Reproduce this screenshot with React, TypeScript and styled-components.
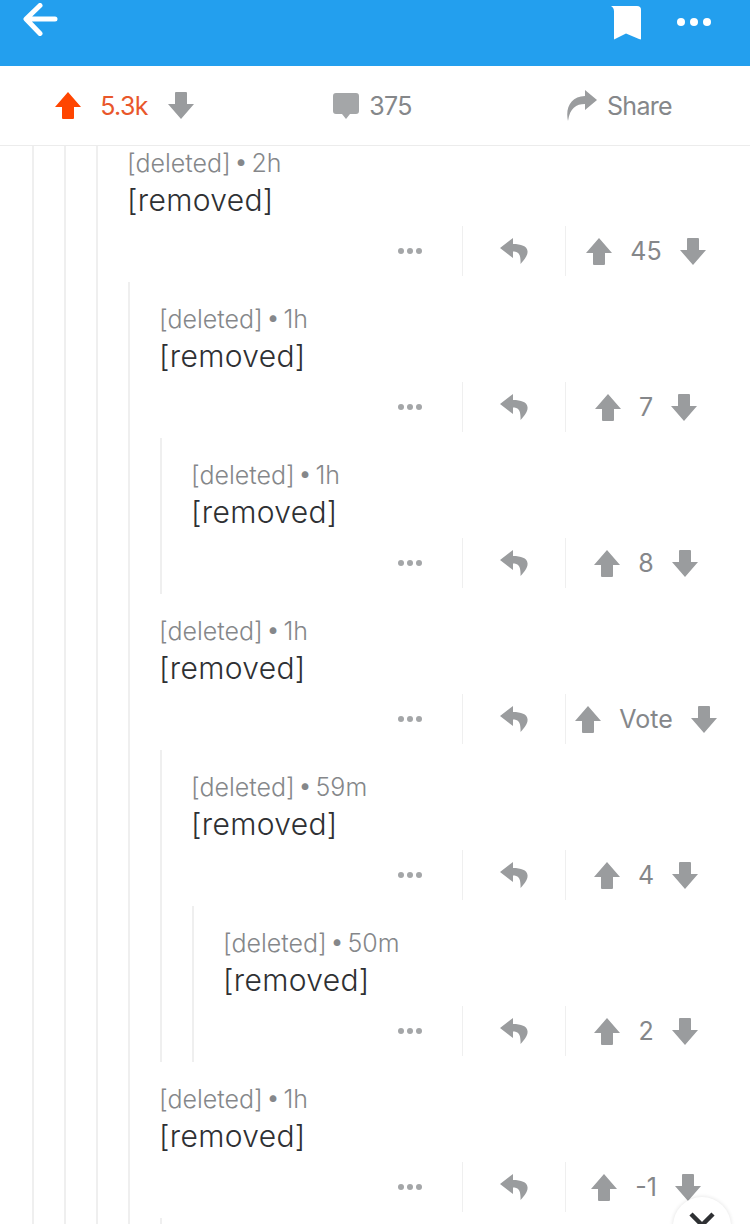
import React from "react";
import styled, { createGlobalStyle } from "styled-components";

const Global = createGlobalStyle`
  html, body { margin: 0; padding: 0; background: #fff; }
  body { font-family: Inter, "Liberation Sans", sans-serif; }
`;

const Page = styled.div`
  position: relative;
  width: 750px;
  height: 1224px;
  overflow: hidden;
  background: #fff;
  display: flex;
  flex-direction: column;
`;

const TopBar = styled.header`
  flex: none;
  height: 66px;
  background: #239fee;
  display: flex;
  justify-content: space-between;
  align-items: flex-start;
  padding: 3px 39px 0 23px;
  box-sizing: border-box;
`;

const TopRight = styled.div`
  display: flex;
  align-items: flex-start;
  gap: 36px;
  padding-top: 3px;
`;

const Dots = styled.div<{ $size: number; $gap: number; $color: string }>`
  display: flex;
  gap: ${(p) => p.$gap}px;
  i {
    display: block;
    width: ${(p) => p.$size}px;
    height: ${(p) => p.$size}px;
    border-radius: 50%;
    background: ${(p) => p.$color};
  }
`;

const TopDots = styled.div`
  padding-top: 12px;
`;

const ActionBar = styled.nav`
  flex: none;
  height: 80px;
  display: grid;
  grid-template-columns: 249px 247px 247px;
  align-items: center;
  border-bottom: 1px solid #ececec;
  box-sizing: border-box;
`;

const BarCell = styled.div`
  display: flex;
  justify-content: center;
  align-items: center;
`;

const BarText = styled.span<{ $orange?: boolean }>`
  font-size: 25px;
  font-weight: 400;
  letter-spacing: -0.7px;
  color: ${(p) => (p.$orange ? "#e9572b" : "#85878a")};
  margin: ${(p) => (p.$orange ? "0 20px 0 19px" : "0 0 0 10px")};
`;

const Feed = styled.main`
  flex: 1;
  overflow: hidden;
  padding-left: 2px;
`;

const Crop = styled.div`
  margin-top: -20px;
`;

const Thread = styled.div`
  margin-left: 30px;
  border-left: 2px solid #efefef;
`;

const ThreadStub = styled(Thread)`
  height: 20px;
`;

const CommentBox = styled.article`
  height: 156px;
  box-sizing: border-box;
  padding: 22px 0 0 29px;
  display: flex;
  flex-direction: column;
  position: relative;
`;

const Meta = styled.div`
  font-size: 25px;
  line-height: 30px;
  font-weight: 300;
  word-spacing: -3.7px;
  color: #85878a;
  white-space: nowrap;
`;

const Body = styled.div`
  font-size: 30px;
  line-height: 36px;
  font-weight: 300;
  letter-spacing: 0.35px;
  color: #2e3033;
  margin-top: 4px;
  white-space: nowrap;
`;

const ActionsRow = styled.div`
  position: absolute;
  left: 0;
  right: 0;
  top: 100px;
  height: 50px;
  display: flex;
  justify-content: flex-end;
  padding-right: 24px;
`;

const DotsCell = styled.div`
  width: 104px;
  padding-left: 2px;
  display: flex;
  justify-content: center;
  align-items: center;
  border-right: 1px solid #efefef;
`;

const ReplyCell = styled.div`
  width: 102px;
  display: flex;
  justify-content: center;
  align-items: center;
  border-right: 1px solid #efefef;
`;

const VoteCell = styled.div`
  width: 160px;
  display: flex;
  justify-content: center;
  align-items: center;
  gap: 18px;
`;

const Count = styled.span`
  font-size: 25px;
  font-weight: 400;
  color: #85878a;
`;

const Fab = styled.div`
  position: absolute;
  left: 673px;
  top: 1197px;
  width: 58px;
  height: 58px;
  border-radius: 50%;
  background: #fff;
  box-shadow: 0 0 4px rgba(0, 0, 0, 0.12);
  display: flex;
  justify-content: center;
  padding-top: 15px;
  box-sizing: border-box;
`;

const Arrow = ({ down, color = "#9a9c9e" }: { down?: boolean; color?: string }) => (
  <svg width="26" height="27" viewBox="0 0 26 27" style={down ? { transform: "rotate(180deg)" } : undefined}>
    <path d="M13 0 L26 15 L19 15 L19 26 Q19 27 18 27 L8 27 Q7 27 7 26 L7 15 L0 15 Z" fill={color} />
  </svg>
);

const Reply = () => (
  <svg width="28" height="26" viewBox="0 0 28 26">
    <path
      d="M13 0 L0 10 L13 20 L13 13.5 C18 13.5 21 15.5 20.5 26 C25 21 28 17 27.5 13 C27 8 21 6 13 6 Z"
      fill="#9a9c9e"
    />
  </svg>
);

type Item = { age: string; score: string };

const Comment = ({ age, score }: Item) => (
  <CommentBox>
    <Meta>[deleted] • {age}</Meta>
    <Body>[removed]</Body>
    <ActionsRow>
      <DotsCell>
        <Dots $size={6} $gap={3} $color="#a4a6a8">
          <i />
          <i />
          <i />
        </Dots>
      </DotsCell>
      <ReplyCell>
        <Reply />
      </ReplyCell>
      <VoteCell>
        <Arrow />
        <Count>{score}</Count>
        <Arrow down />
      </VoteCell>
    </ActionsRow>
  </CommentBox>
);

export default function App() {
  return (
    <Page>
      <Global />
      <TopBar>
        <svg width="35" height="33" viewBox="0 0 35 33" fill="none" stroke="#fff" strokeWidth="5" strokeLinecap="round" strokeLinejoin="round">
          <path d="M32 16 H4 M17 2.5 L3 16 L17 30.5" />
        </svg>
        <TopRight>
          <svg width="30" height="34" viewBox="0 0 30 37" preserveAspectRatio="none">
            <path d="M0 0 H26 Q30 0 30 4 V36 Q30 37 28 36 L15 30 L4 36 Q3 37 3 35 V6 Q3 2 0 0 Z" fill="#fff" />
          </svg>
          <TopDots>
            <Dots $size={8} $gap={5} $color="#fff">
              <i />
              <i />
              <i />
            </Dots>
          </TopDots>
        </TopRight>
      </TopBar>
      <ActionBar>
        <BarCell>
          <Arrow color="#ff4500" />
          <BarText $orange>5.3k</BarText>
          <Arrow down />
        </BarCell>
        <BarCell>
          <svg width="26" height="26" viewBox="0 0 26 26">
            <path d="M3 0 H23 Q26 0 26 3 V18 Q26 21 23 21 H17 L13 26 L9 21 H3 Q0 21 0 18 V3 Q0 0 3 0 Z" fill="#a4a6a8" />
          </svg>
          <BarText>375</BarText>
        </BarCell>
        <BarCell>
          <svg width="30" height="31" viewBox="0 0 30 31">
            <path d="M18 0 L30 10 L18 20 L18 14 C9 14 3 18 1 31 C-2 18 4 6 18 6 Z" fill="#9a9c9e" />
          </svg>
          <BarText>Share</BarText>
        </BarCell>
      </ActionBar>
      <Feed>
        <Crop>
          <Thread>
            <Thread>
              <Thread>
                <Comment age="2h" score="45" />
                <Thread>
                  <Comment age="1h" score="7" />
                  <Thread>
                    <Comment age="1h" score="8" />
                  </Thread>
                  <Comment age="1h" score="Vote" />
                  <Thread>
                    <Comment age="59m" score="4" />
                    <Thread>
                      <Comment age="50m" score="2" />
                    </Thread>
                  </Thread>
                  <Comment age="1h" score="-1" />
                  <ThreadStub />
                </Thread>
              </Thread>
            </Thread>
          </Thread>
        </Crop>
      </Feed>
      <Fab>
        <svg width="26" height="16" viewBox="0 0 26 16" fill="none" stroke="#2e3033" strokeWidth="4.5">
          <path d="M2 2 L13 13 L24 2" />
        </svg>
      </Fab>
    </Page>
  );
}
